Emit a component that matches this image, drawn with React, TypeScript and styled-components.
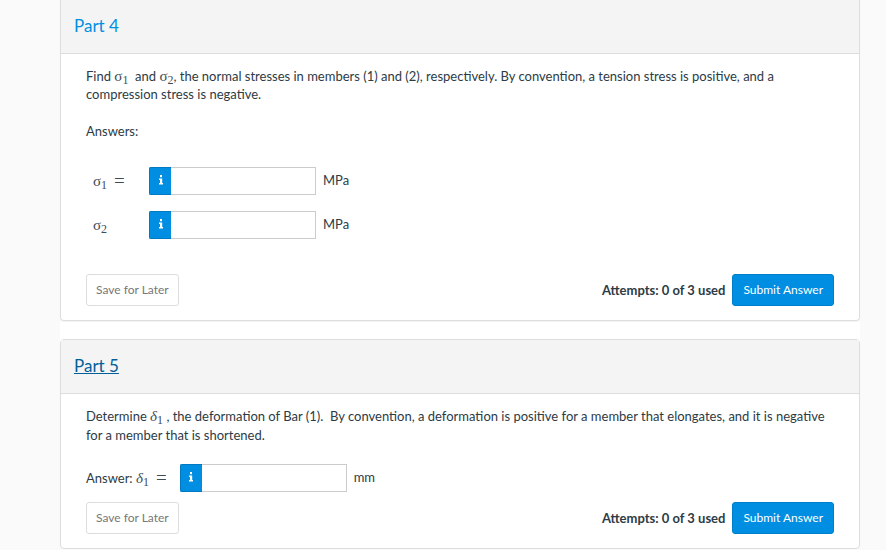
import React from "react";
import styled, { createGlobalStyle } from "styled-components";

const GlobalStyle = createGlobalStyle`
  * { box-sizing: border-box; }
  body {
    margin: 0;
    background: #fafafa;
    color: #2d3b45;
    font-family: Lato, "Liberation Sans", sans-serif;
    font-size: 13px;
    line-height: 18px;
  }
`;

const Page = styled.main`
  margin: 0 26px 0 60px;
  background: #ffffff;
  display: flex;
  flex-direction: column;
  gap: 18px;
`;

const Card = styled.section<{ $continued?: boolean }>`
  border: 1px solid #dddddd;
  border-top-width: ${(p) => (p.$continued ? "0" : "1px")};
  border-radius: ${(p) => (p.$continued ? "0 0 4px 4px" : "4px")};
  box-shadow: 0 1px 1px rgba(0, 0, 0, 0.05);
`;

const CardHeader = styled.header`
  padding: 16px 13px 17px;
  background: #f4f4f4;
  border-bottom: 1px solid #dddddd;
`;

const Title = styled.h2`
  margin: 0;
  font-size: 17px;
  line-height: 20px;
  font-weight: 400;
`;

const TitleLink = styled.a<{ $hovered?: boolean }>`
  color: ${(p) => (p.$hovered ? "#005f99" : "#008ee2")};
  text-decoration: ${(p) => (p.$hovered ? "underline" : "none")};
`;

const CardBody = styled.div`
  padding: 13px 25px 14px;
`;

const Paragraph = styled.p<{ $loose?: boolean }>`
  margin: 0 0 19px;
  line-height: ${(p) => (p.$loose ? "19px" : "18px")};
`;

const MathText = styled.span<{ $italic?: boolean }>`
  font-family: "Liberation Serif", serif;
  font-size: 15px;
  line-height: 1px;
  font-style: ${(p) => (p.$italic ? "italic" : "normal")};
  color: #3f4c55;
  white-space: nowrap;
`;

const Sub = styled.sub`
  font-size: 12px;
  line-height: 1px;
  font-style: normal;
  vertical-align: -3px;
`;

const Equals = styled.span`
  margin-left: 7px;
  font-size: 19px;
  line-height: 1px;
  font-style: normal;
  vertical-align: -1px;
`;

const AnswerTable = styled.table`
  margin: 18px 0 27px;
  border-collapse: collapse;

  td, th {
    height: 44px;
    padding: 0 0 0 7px;
    text-align: left;
    font-weight: 400;
  }
  th { width: 63px; }
  td { padding: 0; }
`;

const Field = styled.span`
  display: inline-flex;
  align-items: center;
  vertical-align: middle;
`;

const InfoButton = styled.button`
  width: 22px;
  height: 28px;
  padding: 0 0 2px;
  border: 1px solid #0079c1;
  border-right: 0;
  border-radius: 2px 0 0 2px;
  background: #008ee2;
  color: #ffffff;
  display: flex;
  align-items: center;
  justify-content: center;
`;

const ValueInput = styled.input`
  width: 145px;
  height: 28px;
  padding: 0 8px;
  border: 1px solid #cccccc;
  border-left: 0;
  border-radius: 0;
  background: #ffffff;
  font: inherit;
  color: inherit;
`;

const Unit = styled.span`
  margin-left: 7px;
  padding-bottom: 2px;
`;

const AnswerLine = styled.div`
  display: flex;
  align-items: center;
  gap: 13px;
  margin-bottom: 10px;
`;

const Actions = styled.footer`
  display: flex;
  align-items: center;
  justify-content: space-between;
`;

const Submission = styled.div`
  display: flex;
  align-items: center;
  gap: 7px;
`;

const Attempts = styled.span`
  font-weight: 700;
  padding-bottom: 1px;
`;

const ActionButton = styled.button<{ $primary?: boolean }>`
  height: 32px;
  padding: ${(p) => (p.$primary ? "0 10px 1px" : "0 9px 1px")};
  border: 1px solid ${(p) => (p.$primary ? "#007fca" : "#dddddd")};
  border-radius: 3px;
  background: ${(p) => (p.$primary ? "#008ee2" : "#ffffff")};
  color: ${(p) => (p.$primary ? "#ffffff" : "#777777")};
  font: inherit;
  font-size: 12px;
`;

const InfoIcon = () => (
  <svg width="6" height="10" viewBox="0 0 6 10" fill="currentColor" aria-hidden="true">
    <path d="M2 0h2v2.3H2zM1 3.6h3.2V8H5v1.4H1V8h1V5H1z" />
  </svg>
);

type SymbolProps = { index: number; equals?: boolean };

const Sigma = ({ index, equals }: SymbolProps) => (
  <MathText>
    σ<Sub>{index}</Sub>
    {equals && <Equals>=</Equals>}
  </MathText>
);

const Delta = ({ index, equals }: SymbolProps) => (
  <MathText $italic>
    δ<Sub>{index}</Sub>
    {equals && <Equals>=</Equals>}
  </MathText>
);

const AnswerField = ({ id, unit }: { id: string; unit: string }) => (
  <Field>
    <InfoButton type="button" aria-label="Answer information">
      <InfoIcon />
    </InfoButton>
    <ValueInput id={id} type="text" />
    <Unit>{unit}</Unit>
  </Field>
);

const PartActions = () => (
  <Actions>
    <ActionButton type="button">Save for Later</ActionButton>
    <Submission>
      <Attempts>Attempts: 0 of 3 used</Attempts>
      <ActionButton type="button" $primary>Submit Answer</ActionButton>
    </Submission>
  </Actions>
);

export default function App() {
  return (
    <>
      <GlobalStyle />
      <Page>
        <Card $continued>
          <CardHeader>
            <Title><TitleLink href="#part-4">Part 4</TitleLink></Title>
          </CardHeader>
          <CardBody id="part-4">
            <Paragraph>
              Find <Sigma index={1} />
              {"\u00a0 and "}
              <Sigma index={2} />, the normal stresses in members (1) and (2), respectively. By
              convention, a tension stress is positive, and a compression stress is negative.
            </Paragraph>
            <Paragraph>Answers:</Paragraph>
            <AnswerTable>
              <tbody>
                <tr>
                  <th scope="row"><label htmlFor="sigma-1"><Sigma index={1} equals /></label></th>
                  <td><AnswerField id="sigma-1" unit="MPa" /></td>
                </tr>
                <tr>
                  <th scope="row"><label htmlFor="sigma-2"><Sigma index={2} /></label></th>
                  <td><AnswerField id="sigma-2" unit="MPa" /></td>
                </tr>
              </tbody>
            </AnswerTable>
            <PartActions />
          </CardBody>
        </Card>

        <Card>
          <CardHeader>
            <Title><TitleLink href="#part-5" $hovered>Part 5</TitleLink></Title>
          </CardHeader>
          <CardBody id="part-5">
            <Paragraph $loose>
              Determine <Delta index={1} />
              {" , the deformation of Bar (1).\u00a0 By convention, a deformation is positive for a member that elongates, and it is negative for a member that is shortened."}
            </Paragraph>
            <AnswerLine>
              <label htmlFor="delta-1">Answer: <Delta index={1} equals /></label>
              <AnswerField id="delta-1" unit="mm" />
            </AnswerLine>
            <PartActions />
          </CardBody>
        </Card>
      </Page>
    </>
  );
}
